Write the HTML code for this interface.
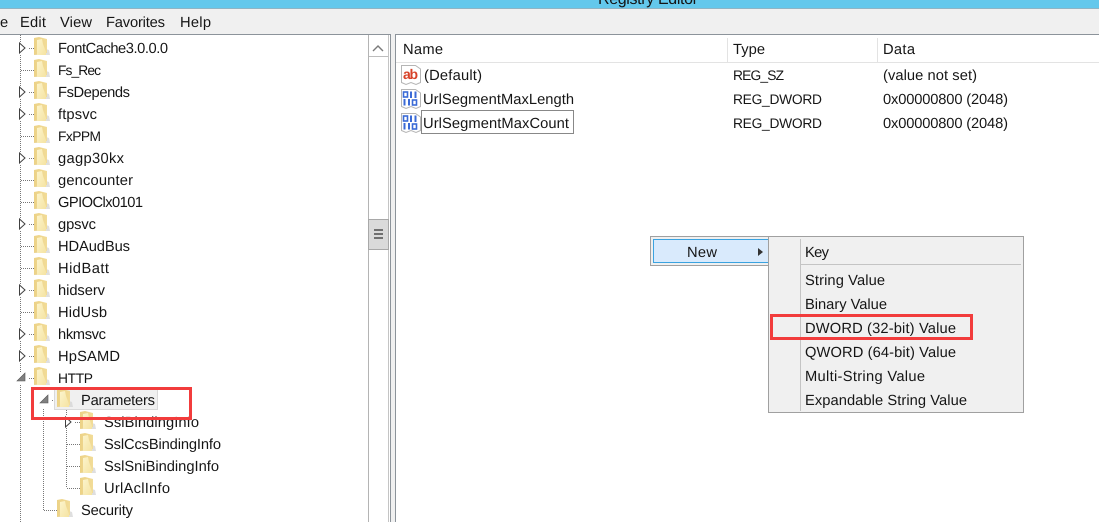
<!DOCTYPE html>
<html><head><meta charset="utf-8"><title>Registry Editor</title>
<style>
html,body{margin:0;padding:0;background:#f0f0f0;width:1099px;height:522px;overflow:hidden}
svg{display:block}
text{font-family:"Liberation Sans",sans-serif;font-size:14.7px;fill:#151515;text-rendering:geometricPrecision}
.t{font-size:13.8px}
.c{shape-rendering:crispEdges}
</style></head><body>
<svg width="1099" height="522" viewBox="0 0 1099 522" xmlns="http://www.w3.org/2000/svg">
<defs>
<linearGradient id="b" x1="0" y1="0" x2="1" y2="0"><stop offset="0" stop-color="#ecd286"/><stop offset="1" stop-color="#f2dc98"/></linearGradient>
<linearGradient id="c" x1="0" y1="0" x2="1" y2="1"><stop offset="0" stop-color="#fcf4cc"/><stop offset="1" stop-color="#f5e3a2"/></linearGradient>
<g id="f">
<path d="M2 7 L17 7 L16 2 L13 1 L2 4Z" fill="#d4d4d4" opacity=".75"/>
<path d="M1 -10 L6 -11 L14 -9 L14 5 L1 7Z" fill="url(#b)"/>
<path d="M4 -8 L9 -9 L10 -4 L13 4 L13 7 L4 7 Z" fill="url(#c)"/>
</g>
<path id="r" d="M0 -5 L5.500 0 L0 5Z" fill="#fff" stroke="#404040" stroke-width="1"/>
<path id="d" d="M0 8 L8 8 L8 0Z" fill="#808080" stroke="#555" stroke-width=".6"/>
<path id="p" d="M.5 .5 H14.500 L19.500 4 V17.500 L15 19.500 L10 17.500 L5 19.500 L.5 17.500Z" fill="#fff" stroke="#b5b5b5"/>
<g id="bi"><use href="#p"/>
<g fill="#3a6ad6">
<rect x="2.500" y="3" width="4" height="5" fill="none" stroke="#3a6ad6" stroke-width="1.600"/>
<rect x="9" y="2.500" width="2" height="6.500"/><rect x="13.500" y="2.500" width="2" height="6.500"/>
<rect x="2.500" y="10" width="2" height="6.500"/><rect x="7" y="10" width="2" height="6.500"/>
<rect x="11.500" y="11" width="4" height="5" fill="none" stroke="#3a6ad6" stroke-width="1.600"/>
</g></g>
</defs>

<rect width="1099" height="522" fill="#f0f0f0"/>
<rect width="1099" height="8" fill="#63c8ec"/>
<rect y="8" width="1099" height="1" fill="#8fb4c4"/>
<text x="598" y="4" textLength="100" lengthAdjust="spacing" style="font-size:16px">Registry Editor</text>

<text x="0" y="27">e</text>
<text x="20" y="27" textLength="26" lengthAdjust="spacing">Edit</text>
<text x="60" y="27" textLength="32" lengthAdjust="spacing">View</text>
<text x="106" y="27" textLength="59" lengthAdjust="spacing">Favorites</text>
<text x="180" y="27" textLength="31" lengthAdjust="spacing">Help</text>

<!-- tree panel -->
<rect x="0" y="35" width="390" height="487" fill="#fff"/>
<rect x="0" y="34" width="391" height="1" fill="#8c939a"/>
<rect x="390" y="34" width="1" height="488" fill="#8c939a"/>
<!-- scrollbar -->
<rect x="368" y="35" width="1" height="487" fill="#b4b4b4"/>
<rect x="388" y="35" width="1" height="487" fill="#c4c4c4"/>
<rect x="369" y="56" width="19" height="1" fill="#bdbdbd"/>
<path d="M373 51 L378 46 L383 51" fill="none" stroke="#7a7a7a" stroke-width="1.400"/>
<rect x="368.500" y="219.500" width="20" height="30" fill="#dadada" stroke="#a8a8a8"/>
<rect x="374" y="229" width="9" height="2" fill="#707070"/>
<rect x="374" y="233" width="9" height="2" fill="#707070"/>
<rect x="374" y="237" width="9" height="2" fill="#707070"/>

<!-- tree lines -->
<g class="c" stroke="#777" stroke-width="1" stroke-dasharray="1 1" fill="none">
<path d="M20.500 35V522"/>
<path d="M43.500 409V510"/>
<path d="M66.500 410V488"/>
<path d="M21 70.500H34M21 136.500H34M21 180.500H34M21 202.500H34M21 246.500H34M21 268.500H34M21 312.500H34"/>
<path d="M29 48.500H34M29 92.500H34M29 114.500H34M29 158.500H34M29 224.500H34M29 290.500H34M29 334.500H34M29 356.500H34M29 378.500H34"/>
<path d="M52 400.500H57M75 422.500H80M67 444.500H80M67 466.500H80M67 488.500H80M44 510.500H57"/>
</g>
<rect x="16" y="42" width="8" height="12" fill="#fff"/>
<rect x="16" y="86" width="8" height="12" fill="#fff"/>
<rect x="16" y="108" width="8" height="12" fill="#fff"/>
<rect x="16" y="152" width="8" height="12" fill="#fff"/>
<rect x="16" y="218" width="8" height="12" fill="#fff"/>
<rect x="16" y="284" width="8" height="12" fill="#fff"/>
<rect x="16" y="328" width="8" height="12" fill="#fff"/>
<rect x="16" y="350" width="8" height="12" fill="#fff"/>
<rect x="16" y="372" width="9" height="12" fill="#fff"/>
<use href="#r" x="19.500" y="48"/><use href="#r" x="19.500" y="92"/><use href="#r" x="19.500" y="114"/>
<use href="#r" x="19.500" y="158"/><use href="#r" x="19.500" y="224"/><use href="#r" x="19.500" y="290"/>
<use href="#r" x="19.500" y="334"/><use href="#r" x="19.500" y="356"/>
<use href="#d" x="17" y="373"/>
<use href="#d" x="40" y="395"/>
<rect x="62" y="416" width="8" height="12" fill="#fff"/>
<use href="#r" x="65.500" y="422"/>

<!-- selection -->
<rect x="54.500" y="389.500" width="103" height="20" fill="#f0f0f0" stroke="#d9d9d9"/>

<!-- folders -->
<use href="#f" x="33" y="48"/><use href="#f" x="33" y="70"/><use href="#f" x="33" y="92"/>
<use href="#f" x="33" y="114"/><use href="#f" x="33" y="136"/><use href="#f" x="33" y="158"/>
<use href="#f" x="33" y="180"/><use href="#f" x="33" y="202"/><use href="#f" x="33" y="224"/>
<use href="#f" x="33" y="246"/><use href="#f" x="33" y="268"/><use href="#f" x="33" y="290"/>
<use href="#f" x="33" y="312"/><use href="#f" x="33" y="334"/><use href="#f" x="33" y="356"/>
<use href="#f" x="33" y="378"/>
<use href="#f" x="56" y="400"/>
<use href="#f" x="79" y="422"/><use href="#f" x="79" y="444"/><use href="#f" x="79" y="466"/><use href="#f" x="79" y="488"/>
<use href="#f" x="56" y="510"/>

<!-- tree text -->
<text x="58" y="53" textLength="110" lengthAdjust="spacing">FontCache3.0.0.0</text>
<text x="58" y="75" textLength="43" lengthAdjust="spacing" class="t">Fs_Rec</text>
<text x="58" y="97" textLength="72" lengthAdjust="spacing">FsDepends</text>
<text x="58" y="119" textLength="39" lengthAdjust="spacing">ftpsvc</text>
<text x="58" y="141" textLength="43" lengthAdjust="spacing" class="t">FxPPM</text>
<text x="58" y="163" textLength="66" lengthAdjust="spacing">gagp30kx</text>
<text x="58" y="185" textLength="75" lengthAdjust="spacing">gencounter</text>
<text x="58" y="207" textLength="85" lengthAdjust="spacing">GPIOClx0101</text>
<text x="58" y="229" textLength="38" lengthAdjust="spacing">gpsvc</text>
<text x="58" y="251" textLength="72" lengthAdjust="spacing">HDAudBus</text>
<text x="58" y="273" textLength="51" lengthAdjust="spacing">HidBatt</text>
<text x="58" y="295" textLength="47" lengthAdjust="spacing">hidserv</text>
<text x="58" y="317" textLength="49" lengthAdjust="spacing">HidUsb</text>
<text x="58" y="339" textLength="48" lengthAdjust="spacing">hkmsvc</text>
<text x="58" y="361" textLength="62" lengthAdjust="spacing">HpSAMD</text>
<text x="58" y="383" textLength="35" lengthAdjust="spacing" class="t">HTTP</text>
<text x="81" y="405" textLength="74" lengthAdjust="spacing">Parameters</text>
<text x="104" y="427" textLength="95" lengthAdjust="spacing">SslBindingInfo</text>
<text x="104" y="449" textLength="117" lengthAdjust="spacing">SslCcsBindingInfo</text>
<text x="104" y="471" textLength="115" lengthAdjust="spacing">SslSniBindingInfo</text>
<text x="104" y="493" textLength="66" lengthAdjust="spacing">UrlAclInfo</text>
<text x="81" y="515" textLength="52" lengthAdjust="spacing">Security</text>

<rect x="32.500" y="388.500" width="158" height="30" fill="none" stroke="#f23c3c" stroke-width="3"/>

<!-- right panel -->
<rect x="395" y="34" width="704" height="488" fill="#fff"/>
<rect x="395" y="34" width="704" height="1" fill="#8c939a"/>
<rect x="395" y="34" width="1" height="488" fill="#8c939a"/>
<rect x="396" y="62" width="703" height="1" fill="#e3e3e3"/>
<rect x="727" y="38" width="1" height="24" fill="#e3e3e3"/>
<rect x="877" y="38" width="1" height="24" fill="#e3e3e3"/>
<text x="403" y="54" textLength="40" lengthAdjust="spacing">Name</text>
<text x="733" y="54" textLength="32" lengthAdjust="spacing">Type</text>
<text x="883" y="54" textLength="32" lengthAdjust="spacing">Data</text>

<use href="#p" x="401" y="65"/>
<text x="403" y="79" style="font-size:14px;font-weight:bold;fill:#d8432a" textLength="15" lengthAdjust="spacing">ab</text>
<use href="#bi" x="401" y="89"/>
<use href="#bi" x="401" y="113"/>

<text x="424" y="80" textLength="58" lengthAdjust="spacing">(Default)</text>
<text x="423" y="104" textLength="151" lengthAdjust="spacing">UrlSegmentMaxLength</text>
<text x="423" y="128" textLength="146" lengthAdjust="spacing">UrlSegmentMaxCount</text>
<rect class="c" x="421.500" y="110.500" width="152" height="23" fill="none" stroke="#111" stroke-dasharray="1 1"/>

<text x="733" y="80" textLength="51" lengthAdjust="spacing" class="t">REG_SZ</text>
<text x="733" y="104" textLength="89" lengthAdjust="spacing" class="t">REG_DWORD</text>
<text x="733" y="128" textLength="89" lengthAdjust="spacing" class="t">REG_DWORD</text>
<text x="883" y="80" textLength="94" lengthAdjust="spacing">(value not set)</text>
<text x="883" y="104" textLength="125" lengthAdjust="spacing">0x00000800 (2048)</text>
<text x="883" y="128" textLength="125" lengthAdjust="spacing">0x00000800 (2048)</text>

<!-- context menu -->
<rect x="650.500" y="236.500" width="120" height="29" fill="#f0f0f0" stroke="#a0a0a0"/>
<rect x="653.500" y="239.500" width="118" height="23" fill="#d9eafc" stroke="#3ba3e0"/>
<text x="687" y="257" textLength="30" lengthAdjust="spacing">New</text>
<path d="M758 248 L763 252 L758 256Z" fill="#333"/>

<rect x="768.500" y="236.500" width="255" height="176" fill="#f0f0f0" stroke="#a0a0a0"/>
<rect x="800" y="239" width="1" height="172" fill="#c4c4c4"/>
<rect x="801" y="264" width="220" height="1" fill="#c4c4c4"/>
<text x="805" y="257" textLength="24" lengthAdjust="spacing">Key</text>
<text x="805" y="285" textLength="80" lengthAdjust="spacing">String Value</text>
<text x="805" y="309" textLength="82" lengthAdjust="spacing">Binary Value</text>
<text x="805" y="333" textLength="151" lengthAdjust="spacing">DWORD (32-bit) Value</text>
<text x="805" y="357" textLength="151" lengthAdjust="spacing">QWORD (64-bit) Value</text>
<text x="805" y="381" textLength="120" lengthAdjust="spacing">Multi-String Value</text>
<text x="805" y="405" textLength="162" lengthAdjust="spacing">Expandable String Value</text>
<rect x="771.500" y="315.500" width="200" height="23" fill="none" stroke="#f23c3c" stroke-width="3"/>
</svg>
</body></html>
